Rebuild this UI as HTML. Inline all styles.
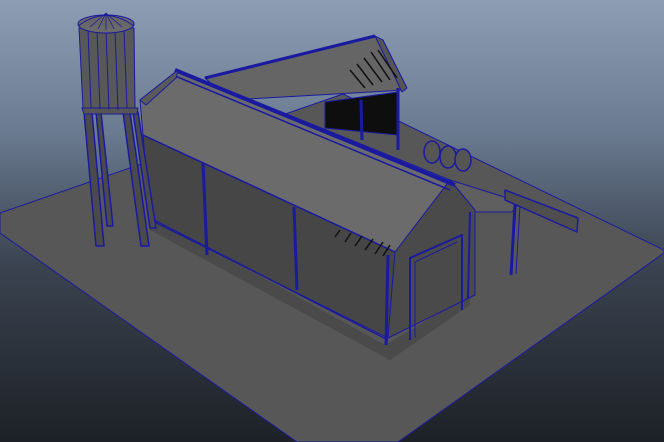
<!DOCTYPE html>
<html><head><meta charset="utf-8"><style>
html,body{margin:0;padding:0;width:664px;height:442px;overflow:hidden}
body{background:linear-gradient(#8d9db3 0%,#6a7a90 30%,#3a4350 60%,#1d2127 100%)}
svg{display:block}
</style></head><body>
<svg width="664" height="442" viewBox="0 0 664 442" xmlns="http://www.w3.org/2000/svg">
<g stroke="#1a1aa0" stroke-width="1" stroke-linejoin="round">
<polygon points="0,213 343,94 664,250 664,253 398,442 297,442 0,233" fill="#575757"/>
<polygon points="150,215 385,345 470,295 470,305 390,360 150,230" fill="#4a4a4a" stroke="none"/>
<!-- back wing -->
<polygon points="205,78 375,36 405,90 230,100" fill="#656565"/>
<polygon points="375,36 383,40 407,88 402,92" fill="#555"/>
<polygon points="325,102 398,92 398,135 325,128" fill="#0e0e0e"/>
<line x1="398" y1="88" x2="398" y2="150" stroke-width="3"/>
<line x1="361" y1="100" x2="362" y2="140" stroke-width="3"/>
<g stroke="#111" stroke-width="1.5"><line x1="350" y1="70" x2="365" y2="88"/><line x1="357" y1="64" x2="373" y2="85"/><line x1="364" y1="58" x2="382" y2="82"/><line x1="371" y1="52" x2="390" y2="80"/><line x1="378" y1="50" x2="397" y2="78"/></g>
<line x1="205" y1="78" x2="375" y2="36" stroke-width="3"/>
<!-- lean-to right -->
<polygon points="450,180 520,202 512,212 475,212" fill="#5f5f5f"/>
<line x1="515" y1="205" x2="511" y2="275" stroke-width="3"/>
<line x1="520" y1="205" x2="516" y2="274" stroke-width="1"/>
<polygon points="505,190 578,218 577,232 505,200" fill="#4e4e4e" stroke-width="1.5"/>
<!-- barrels -->
<g fill="#555" stroke-width="1.5"><ellipse cx="432" cy="152" rx="8" ry="11"/><ellipse cx="448" cy="157" rx="8" ry="11"/><ellipse cx="463" cy="160" rx="8" ry="11"/></g>
<!-- main long wall -->
<polygon points="143,135 395,252 388,338 150,220" fill="#464646"/>
<line x1="203" y1="163" x2="207" y2="255" stroke-width="3"/>
<line x1="294" y1="207" x2="297" y2="290" stroke-width="3"/>
<line x1="150" y1="218" x2="388" y2="340" stroke-width="1.5"/>
<!-- gable end -->
<polygon points="395,252 450,180 475,210 475,295 388,338" fill="#4a4a4a"/>
<polyline points="410,340 410,258 462,235 462,310" fill="none" stroke-width="2"/>
<polyline points="415,338 415,262 457,242" fill="none"/>
<line x1="388" y1="255" x2="386" y2="345" stroke-width="3"/>
<line x1="470" y1="212" x2="468" y2="298" stroke-width="2"/>
<!-- roof -->
<polygon points="178,70 450,180 395,252 143,135 140,100" fill="#6b6b6b"/>
<line x1="175" y1="70" x2="455" y2="185" stroke-width="4"/>
<line x1="175" y1="76" x2="450" y2="190" stroke-width="1.5"/>
<polygon points="140,100 178,70 176,78 146,105" fill="#5a5a5a"/>
<line x1="143" y1="135" x2="395" y2="252" stroke-width="1.5"/>
<g stroke="#111" stroke-width="1.5"><line x1="335" y1="237" x2="340" y2="230"/><line x1="345" y1="242" x2="351" y2="233"/><line x1="355" y1="246" x2="362" y2="236"/><line x1="365" y1="250" x2="373" y2="239"/><line x1="375" y1="254" x2="383" y2="242"/><line x1="383" y1="256" x2="390" y2="245"/></g>
<!-- water tower legs -->
<g stroke-width="1.5" fill="#4a4a4a">
<polygon points="84,112 92,112 104,246 96,246"/>
<polygon points="96,112 101,112 113,226 107,226"/>
<polygon points="123,112 130,112 149,246 141,246"/>
<polygon points="133,112 138,112 156,228 150,228"/>
</g>
<polygon points="82,108 138,108 137,114 84,114" fill="#555"/>
<!-- tank -->
<polygon points="79,28 134,28 135,108 83,108" fill="#585858"/>
<g stroke-width="1"><line x1="88" y1="30" x2="91" y2="108"/><line x1="97" y1="31" x2="100" y2="109"/><line x1="106" y1="31" x2="109" y2="110"/><line x1="115" y1="31" x2="118" y2="110"/><line x1="124" y1="30" x2="127" y2="108"/></g>
<ellipse cx="106" cy="24" rx="28" ry="9" fill="#6a6a6a"/>
<path d="M78,26 Q106,5 134,26" fill="#666"/>
<g stroke-width="0.8"><line x1="106" y1="13" x2="90" y2="27"/><line x1="106" y1="13" x2="98" y2="29"/><line x1="106" y1="13" x2="106" y2="30"/><line x1="106" y1="13" x2="114" y2="29"/><line x1="106" y1="13" x2="122" y2="27"/></g>
</g>
</svg>
</body></html>
